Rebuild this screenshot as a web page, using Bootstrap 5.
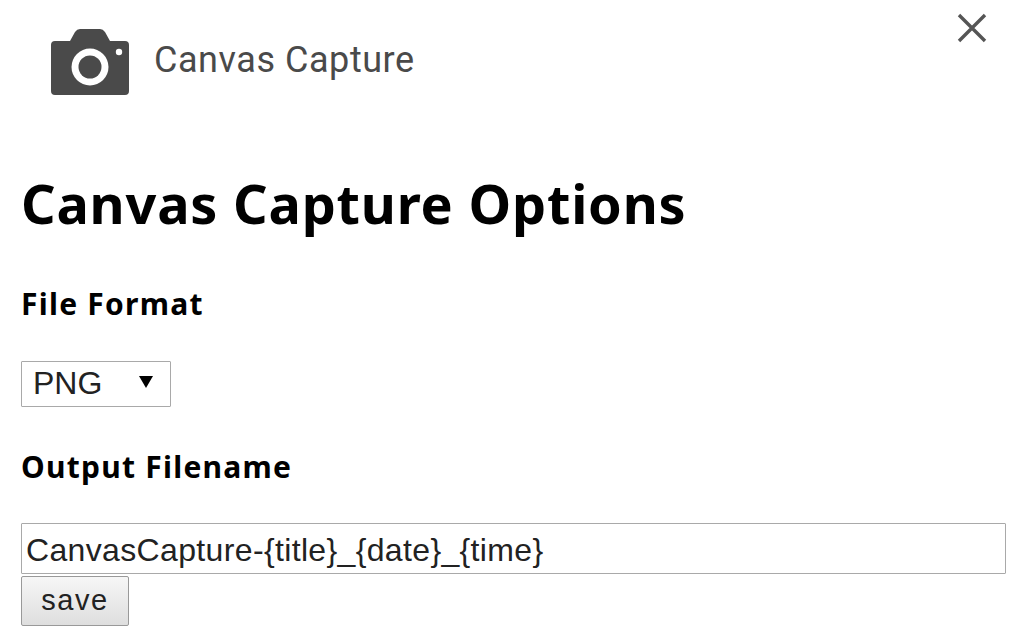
<!DOCTYPE html>
<html lang="en"><head><meta charset="utf-8"><title>Canvas Capture Options</title>
<link href="https://cdn.jsdelivr.net/npm/bootstrap@5.3.0/dist/css/bootstrap.min.css" rel="stylesheet">
<style>
html,body{height:638px;overflow:hidden;background:#fff}
body{font-family:"Noto Sans","DejaVu Sans",sans-serif;color:#000}
.app-head{padding:25px 0 0 50px;height:177px;position:relative}
.app-name{font-family:Roboto,sans-serif;font-size:36px;letter-spacing:.55px;line-height:42px;color:#4a4a4a;margin:14px 0 0 24px}
.close-x{position:absolute;right:33px;top:13px;width:30px;height:30px}
.main-wrap{padding:0 14px 0 21px}
.main-wrap h1{font-family:"Noto Sans",sans-serif;font-weight:700;font-size:54px;letter-spacing:.8px;line-height:60px;margin:-4px 0 55px}
.main-wrap h2{font-family:"Noto Sans",sans-serif;font-weight:700;font-size:30px;letter-spacing:1.25px;line-height:34px;margin:-1px 0 40px}
.select-wrap{width:150px;height:46px;margin-bottom:44px;border:1px solid #a9a9a9;border-radius:1px}
.main-wrap .select-wrap + h2{margin-bottom:39px}
.fmt-select{display:block;width:100%;height:42px;line-height:42px;border:0;background:transparent;appearance:none;font-family:"Liberation Sans",sans-serif;font-size:32px;color:#222;padding:0 0 0 11px}
.fmt-arrow{position:absolute;right:17px;top:14px;width:0;height:0;border-left:7px solid transparent;border-right:7px solid transparent;border-top:12px solid #000;pointer-events:none}
.name-box{display:block;width:100%;height:51px;border:1px solid #a9a9a9;border-radius:1px;font-family:"Liberation Sans",sans-serif;font-size:32px;letter-spacing:.35px;color:#222;padding:3px 4px 0}
.save-btn{display:block;width:108px;height:50px;background:linear-gradient(#f6f6f6,#dedede);border:1px solid #999;border-radius:2px;font-family:"Liberation Sans",sans-serif;font-size:29px;letter-spacing:1.5px;padding:0;margin-top:2px;color:#222}
</style></head><body>
<div class="app-head d-flex align-items-start">
<svg width="80" height="72" viewBox="0 0 80 72"><path fill="#4a4a4a" d="M5 16h15l5-9q2-3 5-3h20q3 0 5 3l5 9h15a4 4 0 0 1 4 4v46a4 4 0 0 1-4 4H5a4 4 0 0 1-4-4V20a4 4 0 0 1 4-4z"/><circle cx="40" cy="42" r="18.5" fill="#fff"/><circle cx="40" cy="42" r="11.5" fill="#4a4a4a"/><circle cx="69" cy="27" r="3.2" fill="#fff"/></svg>
<div class="app-name">Canvas Capture</div>
<svg class="close-x" viewBox="0 0 30 30"><path d="M2 2l26 26M28 2L2 28" stroke="#555" stroke-width="3.4" fill="none"/></svg>
</div>
<div class="main-wrap">
<h1>Canvas Capture Options</h1>
<h2>File Format</h2>
<div class="select-wrap position-relative"><select class="fmt-select" aria-label="File format"><option>PNG</option><option>JPEG</option><option>WEBP</option></select><span class="fmt-arrow"></span></div>
<h2>Output Filename</h2>
<input class="name-box" type="text" aria-label="Output filename" value="CanvasCapture-{title}_{date}_{time}">
<button class="save-btn" type="button">save</button>
</div>
<script src="https://cdn.jsdelivr.net/npm/bootstrap@5.3.0/dist/js/bootstrap.bundle.min.js"></script>
</body></html>
